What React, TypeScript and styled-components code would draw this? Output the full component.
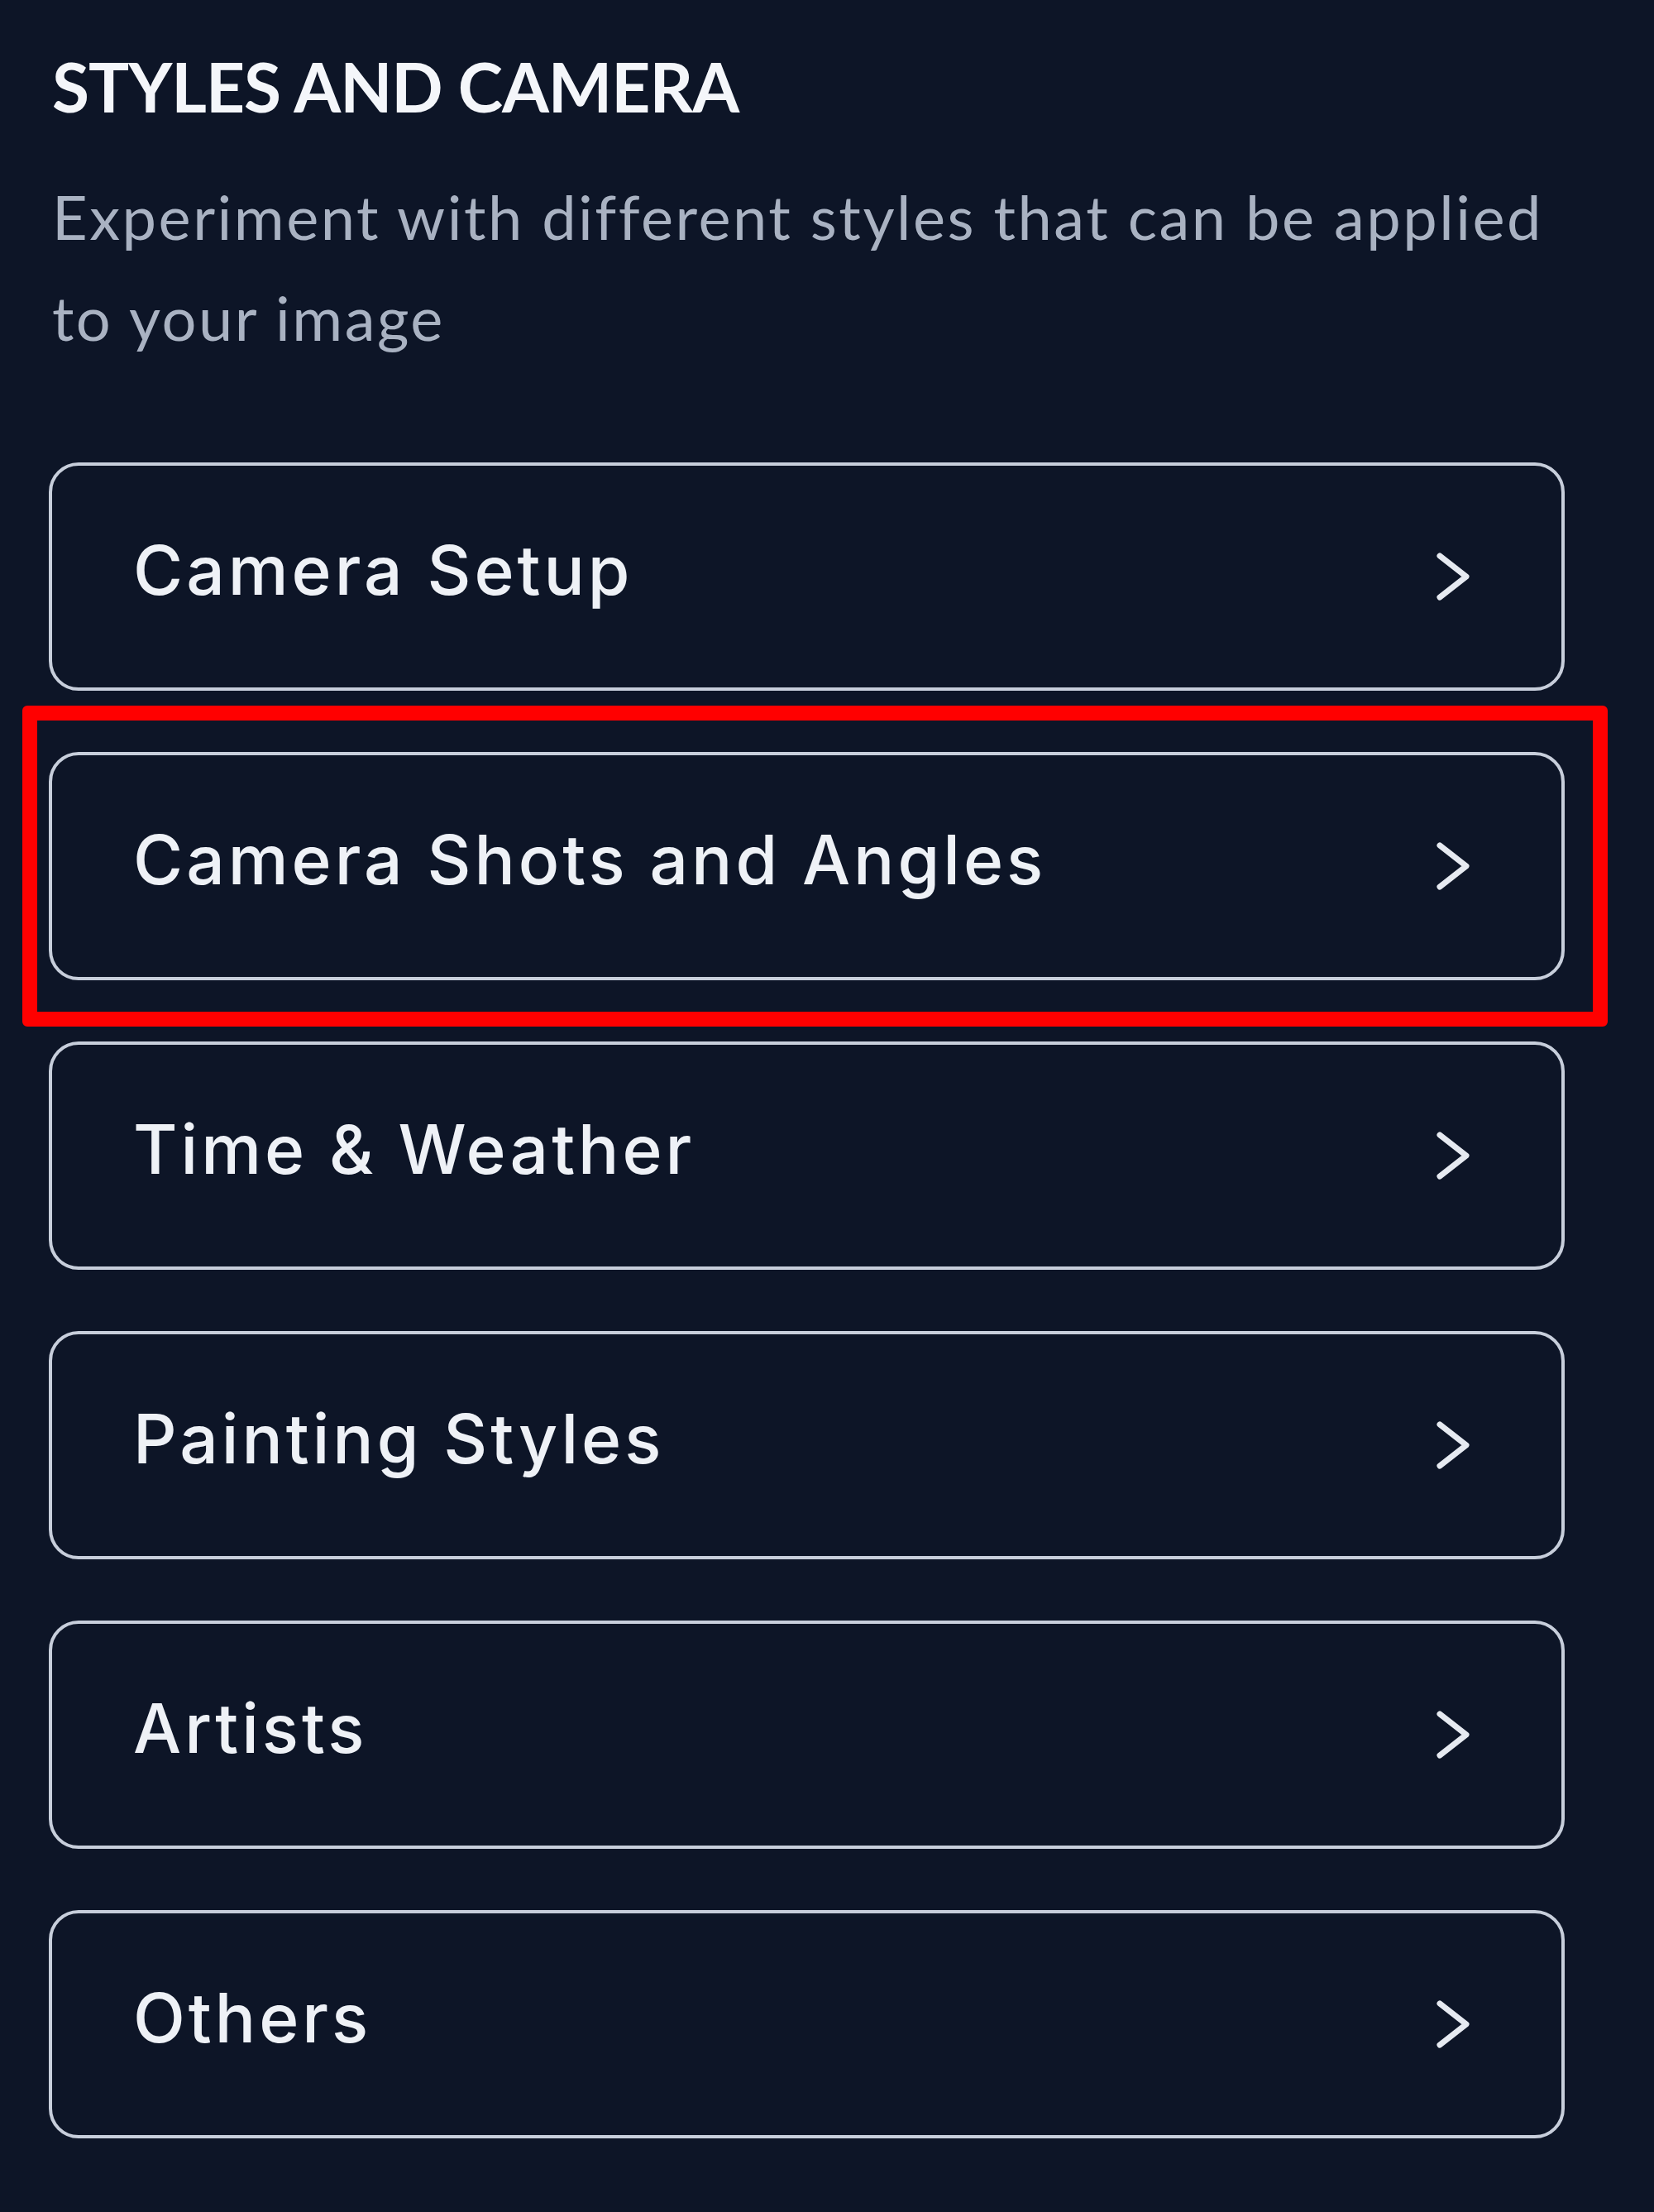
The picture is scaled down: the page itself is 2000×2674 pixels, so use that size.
import React from 'react'
import styled, { createGlobalStyle } from 'styled-components'

const GlobalStyle = createGlobalStyle`
  html, body {
    margin: 0;
    padding: 0;
    background-color: #0d1527;
  }
  * {
    box-sizing: border-box;
  }
`

const items = [
  'Camera Setup',
  'Camera Shots and Angles',
  'Time & Weather',
  'Painting Styles',
  'Artists',
  'Others',
]

const Chevron = () => (
  <ChevronSvg viewBox="0 0 42 60" fill="none">
    <polyline
      points="5,5 37,30 5,55"
      stroke="#e6eaf1"
      strokeWidth="7"
      strokeLinecap="round"
      strokeLinejoin="round"
    />
  </ChevronSvg>
)

const App = () => {
  return (
    <>
      <GlobalStyle />
      <Panel>
        <Title>STYLES AND CAMERA</Title>
        <Description>
          Experiment with different styles that can be applied to your image
        </Description>
        <CardList>
          {items.map((label, i) => (
            <Card key={label} $highlighted={i === 1}>
              <CardLabel>{label}</CardLabel>
              <Chevron />
            </Card>
          ))}
        </CardList>
      </Panel>
    </>
  )
}

const Panel = styled.div`
  width: 2000px;
  min-height: 2674px;
  background-color: #0d1527;
  padding: 54px 108px 0px 59px;
  display: flex;
  flex-direction: column;
`
const Title = styled.h1`
  margin: 0px 0px 0px 4px;
  font-family: Lato, 'Open Sans', sans-serif;
  font-weight: 700;
  font-size: 82px;
  line-height: 100px;
  letter-spacing: -1px;
  color: #f4f6fa;
`
const Description = styled.p`
  margin: 47px 0px 0px 4px;
  width: 1840px;
  font-family: Lato, 'Open Sans', sans-serif;
  font-weight: 400;
  font-size: 74px;
  line-height: 122px;
  letter-spacing: 2.5px;
  color: #a9b2c2;
`
const CardList = styled.div`
  margin-top: 114px;
  display: flex;
  flex-direction: column;
  gap: 74px;
`
const Card = styled.div<{ $highlighted?: boolean }>`
  position: relative;
  height: 276px;
  border: 4px solid #c7cedb;
  border-radius: 36px;
  display: flex;
  align-items: center;
  justify-content: space-between;
  padding: 0px 110px 0px 98px;

  ${(p) =>
    p.$highlighted &&
    `
    &::after {
      content: '';
      position: absolute;
      top: -60px;
      left: -36px;
      right: -56px;
      bottom: -60px;
      border: 18px solid #ff0000;
      border-radius: 6px;
      pointer-events: none;
    }
  `}
`
const CardLabel = styled.span`
  margin-bottom: 14px;
  font-family: Inter, 'Open Sans', sans-serif;
  font-weight: 500;
  font-size: 82px;
  line-height: 1;
  letter-spacing: 4px;
  color: #eef1f6;
`
const ChevronSvg = styled.svg`
  width: 42px;
  height: 60px;
  flex-shrink: 0;
`

export default App
